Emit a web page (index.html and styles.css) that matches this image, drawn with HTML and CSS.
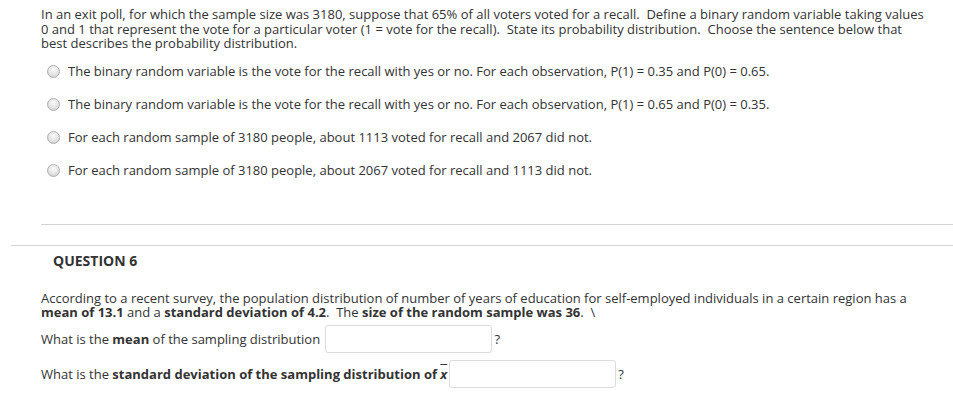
FILE: index.html
```html
<!DOCTYPE html>
<html>
<head>
<meta charset="utf-8">
<link rel="stylesheet" href="styles.css">
</head>
<body>
<div class="q5">
  <p class="stem">In an exit poll, for which the sample size was 3180, suppose that 65% of all voters voted for a recall.&nbsp; Define a binary random variable taking values 0 and 1 that represent the vote for a particular voter (1 = vote for the recall).&nbsp; State its probability distribution.&nbsp; Choose the sentence below that best describes the probability distribution.</p>
  <ul class="options">
    <li class="option"><span class="radio"></span><span>The binary random variable is the vote for the recall with yes or no. For each observation, P(1) = 0.35 and P(0) = 0.65.</span></li>
    <li class="option"><span class="radio"></span><span>The binary random variable is the vote for the recall with yes or no. For each observation, P(1) = 0.65 and P(0) = 0.35.</span></li>
    <li class="option"><span class="radio"></span><span>For each random sample of 3180 people, about 1113 voted for recall and 2067 did not.</span></li>
    <li class="option"><span class="radio"></span><span>For each random sample of 3180 people, about 2067 voted for recall and 1113 did not.</span></li>
  </ul>
  <div class="rule-inner"></div>
</div>
<div class="rule-outer"></div>
<div class="q6">
  <h3 class="qtitle">QUESTION 6</h3>
  <p class="stem">According to a recent survey, the population distribution of number of years of education for self-employed individuals in a certain region has a <b>mean of 13.1</b> and a <b>standard deviation of 4.2</b>.&nbsp; The <b>size of the random sample was 36</b>.&nbsp; \</p>
  <div class="ask">What is the&nbsp;<b>mean</b>&nbsp;of the sampling distribution <span class="field"></span><span class="qm">?</span></div>
  <div class="ask">What is the&nbsp;<b>standard deviation of the sampling distribution of <i class="xbar">x</i></b> <span class="field"></span><span class="qm">?</span></div>
</div>
</body>
</html>
```

FILE: styles.css
```css
html, body {
  margin: 0;
  padding: 0;
  background: #fff;
}
body {
  font-family: "Open Sans", "Liberation Sans", sans-serif;
  font-size: 13px;
  color: #333;
  width: 953px;
  overflow: hidden;
}
b { font-weight: 700; }
.q5 {
  padding: 7px 0 0 41px;
}
.stem {
  margin: 0;
  line-height: 14.5px;
  padding-right: 27px;
}
.options {
  list-style: none;
  margin: 12px 0 0 0;
  padding: 0 0 0 6px;
  display: flex;
  flex-direction: column;
  gap: 16px;
}
.option {
  display: flex;
  align-items: center;
  gap: 8px;
  height: 17px;
}
.radio {
  width: 11px;
  height: 11px;
  border-radius: 50%;
  border: 1px solid #b0b0b0;
  background: radial-gradient(circle at 50% 35%, #fafafa 0%, #e6e6e6 50%, #c8c8c8 100%);
  flex: none;
  box-sizing: content-box;
}
.rule-inner {
  margin-top: 45px;
  height: 1px;
  background: #d4d4d4;
}
.rule-outer {
  margin: 20px 0 0 11px;
  height: 1px;
  background: #d4d4d4;
}
.q6 {
  padding-left: 41px;
}
.qtitle {
  margin: 6px 0 0 12px;
  font-size: 14px;
  font-weight: 700;
  line-height: 17px;
  color: #333;
}
.q6 .stem {
  margin-top: 22px;
}
.ask {
  display: flex;
  align-items: center;
  margin-top: 5px;
  height: 29px;
  white-space: pre;
}
.ask + .ask {
  margin-top: 6px;
}
.field {
  display: inline-block;
  width: 165px;
  height: 26px;
  border: 1px solid #dcdcdc;
  border-radius: 3px;
  margin-left: 2px;
  background: #fff;
}
.qm {
  margin-left: 2px;
  align-self: center;
}
.xbar {
  font-style: italic;
  text-decoration: overline;
}
```
